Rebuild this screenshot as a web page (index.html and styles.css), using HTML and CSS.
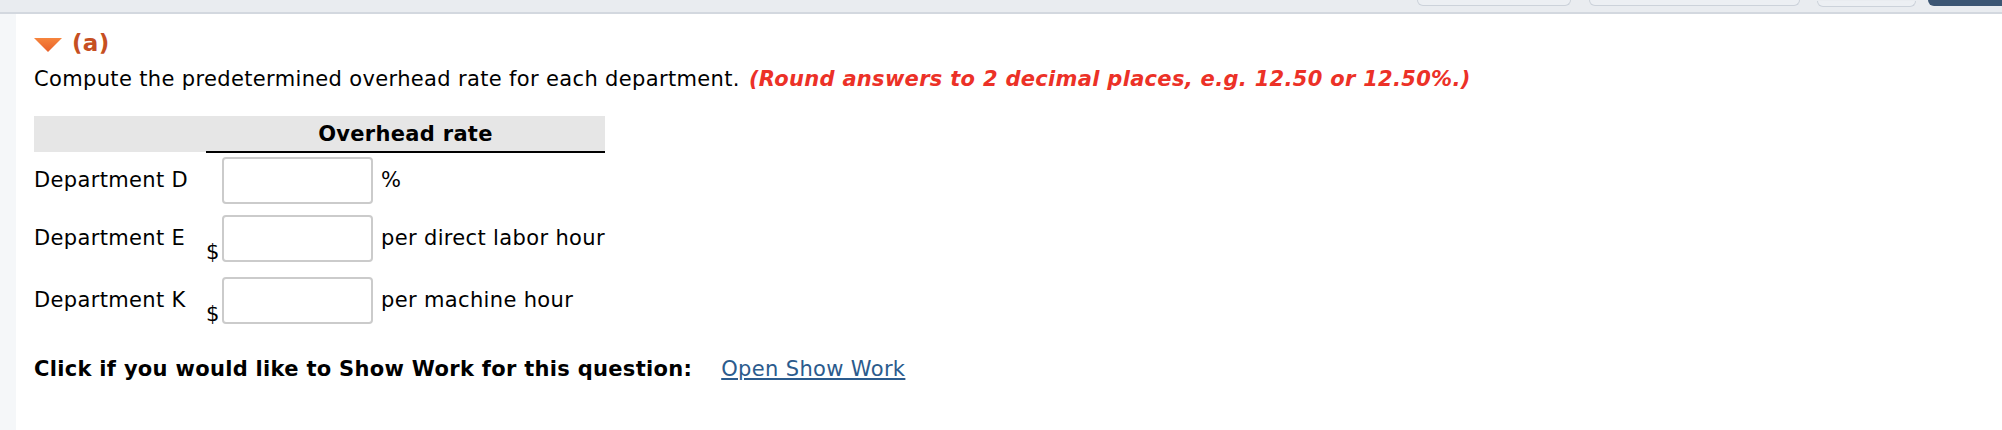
FILE: index.html
```html
<!DOCTYPE html>
<html>
<head>
  <meta charset="UTF-8">
  <title>Overhead Rate</title>
  <link rel="stylesheet" href="styles.css">
</head>
<body>
  <div class="topbar">
    <span class="tab-stub stub-1"></span>
    <span class="tab-stub stub-2"></span>
    <span class="tab-stub stub-3"></span>
    <span class="tab-stub stub-dark"></span>
  </div>

  <div class="page">
    <div class="left-strip"></div>

    <div class="content">
      <div class="part-title">
        <svg class="toggle" width="28" height="14" viewBox="0 0 28 14">
          <defs>
            <linearGradient id="tri" x1="0" y1="0" x2="0" y2="1">
              <stop offset="0" stop-color="#f6853d"/>
              <stop offset="1" stop-color="#e8602a"/>
            </linearGradient>
          </defs>
          <polygon points="0,0 28,0 14,14" fill="url(#tri)"/>
        </svg>
        <span>(a)</span>
      </div>

      <p class="question">Compute the predetermined overhead rate for each department. <em class="hint">(Round answers to 2 decimal places, e.g. 12.50 or 12.50%.)</em></p>

      <table class="answers">
        <tr class="head-row">
          <th class="blank"></th>
          <th class="col-title" colspan="3">Overhead rate</th>
        </tr>
        <tr class="row-short">
          <td class="label">Department D</td>
          <td class="unit-pre"></td>
          <td><input type="text" class="answer-box"></td>
          <td class="unit">%</td>
        </tr>
        <tr>
          <td class="label">Department E</td>
          <td class="unit-pre">$</td>
          <td><input type="text" class="answer-box"></td>
          <td class="unit">per direct labor hour</td>
        </tr>
        <tr>
          <td class="label">Department K</td>
          <td class="unit-pre">$</td>
          <td><input type="text" class="answer-box"></td>
          <td class="unit">per machine hour</td>
        </tr>
      </table>

      <div class="show-work">
        <span class="show-work-text">Click if you would like to Show Work for this question:</span>
        <a href="#" class="show-work-link">Open Show Work</a>
      </div>
    </div>
  </div>
</body>
</html>
```

FILE: styles.css
```css
body {
  margin: 0;
  font-family: "DejaVu Sans", Verdana, sans-serif;
  font-size: 21px;
  letter-spacing: 0.35px;
  color: #000;
  background-color: #fff;
  height: 430px;
  overflow: hidden;
}

/* top toolbar, only its lower edge is in view */
.topbar {
  height: 12px;
  background-color: #e9ecf0;
  border-bottom: 2px solid #d3d8df;
  display: flex;
  justify-content: flex-end;
}
.tab-stub {
  height: 5px;
  border: 1px solid #ccd2da;
  border-top: none;
  border-radius: 0 0 6px 6px;
  background-color: #eceff3;
}
.stub-1 { width: 152px; margin-right: 18px; }
.stub-2 { width: 209px; margin-right: 17px; }
.stub-3 { width: 97px; margin-right: 12px; margin-top: 1px; }
.stub-dark {
  width: 74px;
  height: 6px;
  border: none;
  background-color: #3c5674;
  border-radius: 0 0 0 8px;
}

.page {
  display: flex;
  height: 416px;
}
.left-strip {
  width: 16px;
  background-color: #f5f7f9;
}
.content {
  padding-left: 18px;
}

.part-title {
  display: flex;
  align-items: center;
  gap: 10px;
  margin-top: 17px;
  height: 24px;
  font-size: 23px;
  font-weight: bold;
  letter-spacing: 0.3px;
  color: #c64f22;
}
.toggle {
  margin-top: 3px;
}

.question {
  margin: 12px 0 0 0;
  line-height: 24px;
}
.hint {
  font-weight: bold;
  letter-spacing: 0.3px;
  color: #ec3127;
  margin-left: 2px;
}

.answers {
  border-collapse: collapse;
  margin-top: 25px;
}
.answers td,
.answers th {
  padding: 0;
}
.head-row th {
  background-color: #e6e6e6;
  height: 34px;
  font-weight: bold;
  letter-spacing: 0.3px;
}
.head-row .col-title {
  border-bottom: 2px solid #000;
  text-align: center;
}
.answers tr {
  height: 62px;
}
.answers tr.head-row {
  height: 36px;
}
.answers tr.row-short {
  height: 55px;
}
.label {
  width: 172px;
  vertical-align: middle;
  white-space: nowrap;
}
.unit-pre {
  width: 16px;
  vertical-align: bottom;
  padding-bottom: 6px !important;
  line-height: 22px;
}
.answer-box {
  display: block;
  box-sizing: border-box;
  width: 151px;
  height: 47px;
  margin: 0;
  border: 2px solid #cbcbcb;
  border-radius: 4px;
  font-size: 20px;
}
.unit {
  padding-left: 8px !important;
  white-space: nowrap;
}

.show-work {
  margin-top: 26px;
  line-height: 24px;
}
.show-work-text {
  font-weight: bold;
  letter-spacing: 0.3px;
}
.show-work-link {
  margin-left: 22px;
  color: #2b5b8d;
  text-decoration: underline;
}
```
